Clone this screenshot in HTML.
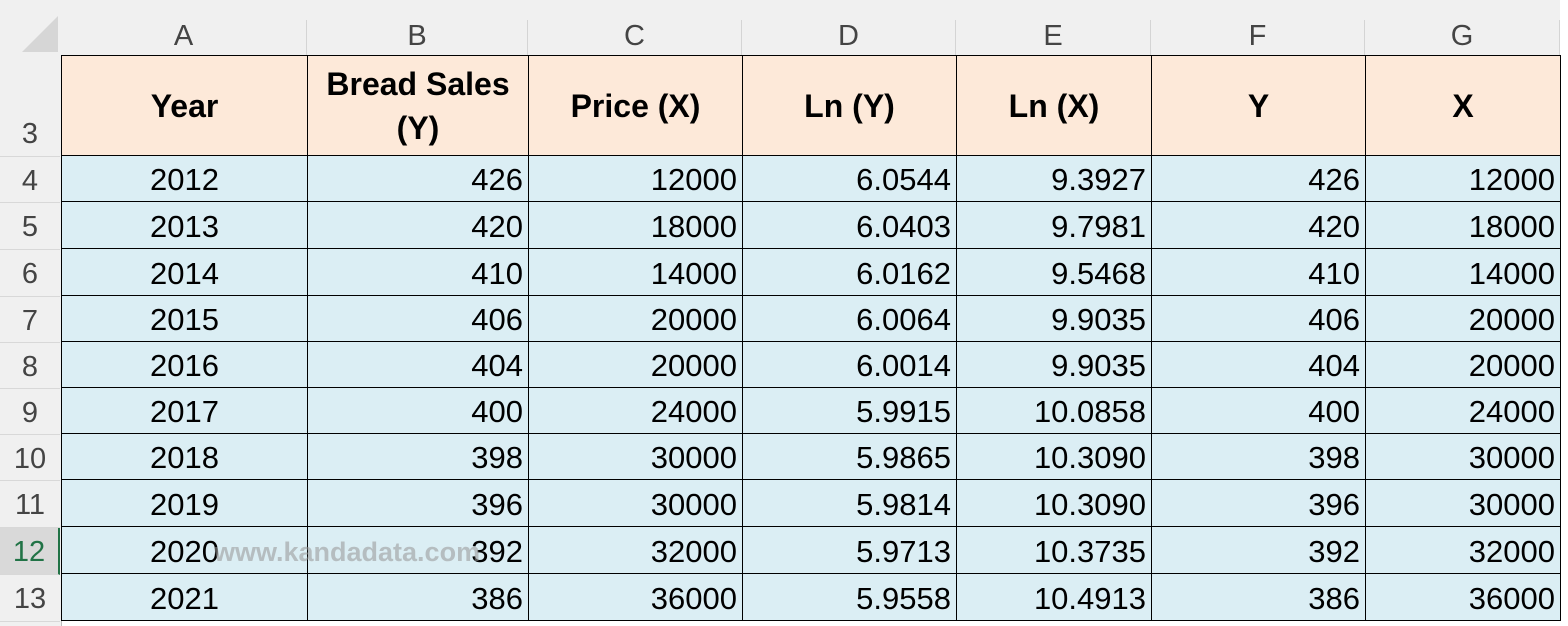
<!DOCTYPE html>
<html><head><meta charset="utf-8"><style>
body{margin:0;width:1568px;height:626px;overflow:hidden;background:#fff;font-family:"Liberation Sans",Arial,sans-serif;position:relative}
.colhdr{position:absolute;top:0;left:0;width:1560px;height:55px;background:#f0f0f0;border-bottom:1px solid #bdbdbd}
.ch{position:absolute;top:20px;height:35px;text-align:center;font-size:29px;color:#444;border-right:1px solid #d4d4d4;box-sizing:border-box}
.rowhdr{position:absolute;left:0;top:55px;width:61px;height:571px;background:#f0f0f0;border-right:1px solid #bdbdbd}
.rn{position:absolute;left:0;width:60px;text-align:center;font-size:29px;color:#444;border-bottom:1px solid #d8d8d8;box-sizing:border-box}
table{position:absolute;left:61px;top:55px;border-collapse:collapse;table-layout:fixed}
td{border:1.5px solid #000;font-size:31px;color:#000;padding:2px 5px 0;overflow:hidden;white-space:nowrap;background:#dbeef4;text-align:right;line-height:1}
tr.h td{background:#fde9d9;font-weight:bold;font-size:32px;text-align:center;height:99px;white-space:normal;line-height:44px;padding:0}
td.c{text-align:center}
.wm{position:absolute;left:214px;top:537px;font-size:27px;font-weight:bold;color:rgba(150,150,150,0.55)}
</style></head><body>
<div class="colhdr"></div>
<svg style="position:absolute;left:20px;top:16px" width="40" height="38"><polygon points="38,0 38,36 2,36" fill="#d6d6d6"/></svg>
<div class="ch" style="left:61px;width:246px">A</div>
<div class="ch" style="left:307px;width:221px">B</div>
<div class="ch" style="left:528px;width:214px">C</div>
<div class="ch" style="left:742px;width:214px">D</div>
<div class="ch" style="left:956px;width:195px">E</div>
<div class="ch" style="left:1151px;width:214px">F</div>
<div class="ch" style="left:1365px;width:195px">G</div>
<div class="rowhdr"></div>
<div class="rn" style="top:56px;height:101px;line-height:156px">3</div>
<div class="rn" style="top:157px;height:46px;line-height:48px">4</div>
<div class="rn" style="top:203px;height:47px;line-height:49px">5</div>
<div class="rn" style="top:250px;height:47px;line-height:49px">6</div>
<div class="rn" style="top:297px;height:46px;line-height:48px">7</div>
<div class="rn" style="top:343px;height:46px;line-height:48px">8</div>
<div class="rn" style="top:389px;height:46px;line-height:48px">9</div>
<div class="rn" style="top:435px;height:46px;line-height:48px">10</div>
<div class="rn" style="top:481px;height:47px;line-height:49px">11</div>
<div class="rn" style="top:528px;height:47px;line-height:49px;background:#d9d9d9;color:#217346;border-right:2px solid #217346">12</div>
<div class="rn" style="top:575px;height:47px;line-height:49px">13</div>
<table>
<colgroup><col style="width:246px"><col style="width:221px"><col style="width:214px"><col style="width:214px"><col style="width:195px"><col style="width:214px"><col style="width:195px"></colgroup>
<tr class="h"><td>Year</td><td>Bread Sales<br>(Y)</td><td>Price (X)</td><td>Ln (Y)</td><td>Ln (X)</td><td>Y</td><td>X</td></tr>
<tr style="height:46px"><td class="c">2012</td><td>426</td><td>12000</td><td>6.0544</td><td>9.3927</td><td>426</td><td>12000</td></tr>
<tr style="height:47px"><td class="c">2013</td><td>420</td><td>18000</td><td>6.0403</td><td>9.7981</td><td>420</td><td>18000</td></tr>
<tr style="height:47px"><td class="c">2014</td><td>410</td><td>14000</td><td>6.0162</td><td>9.5468</td><td>410</td><td>14000</td></tr>
<tr style="height:46px"><td class="c">2015</td><td>406</td><td>20000</td><td>6.0064</td><td>9.9035</td><td>406</td><td>20000</td></tr>
<tr style="height:46px"><td class="c">2016</td><td>404</td><td>20000</td><td>6.0014</td><td>9.9035</td><td>404</td><td>20000</td></tr>
<tr style="height:46px"><td class="c">2017</td><td>400</td><td>24000</td><td>5.9915</td><td>10.0858</td><td>400</td><td>24000</td></tr>
<tr style="height:46px"><td class="c">2018</td><td>398</td><td>30000</td><td>5.9865</td><td>10.3090</td><td>398</td><td>30000</td></tr>
<tr style="height:47px"><td class="c">2019</td><td>396</td><td>30000</td><td>5.9814</td><td>10.3090</td><td>396</td><td>30000</td></tr>
<tr style="height:47px"><td class="c">2020</td><td>392</td><td>32000</td><td>5.9713</td><td>10.3735</td><td>392</td><td>32000</td></tr>
<tr style="height:47px"><td class="c">2021</td><td>386</td><td>36000</td><td>5.9558</td><td>10.4913</td><td>386</td><td>36000</td></tr>
</table>
<div class="wm">www.kandadata.com</div>
</body></html>
